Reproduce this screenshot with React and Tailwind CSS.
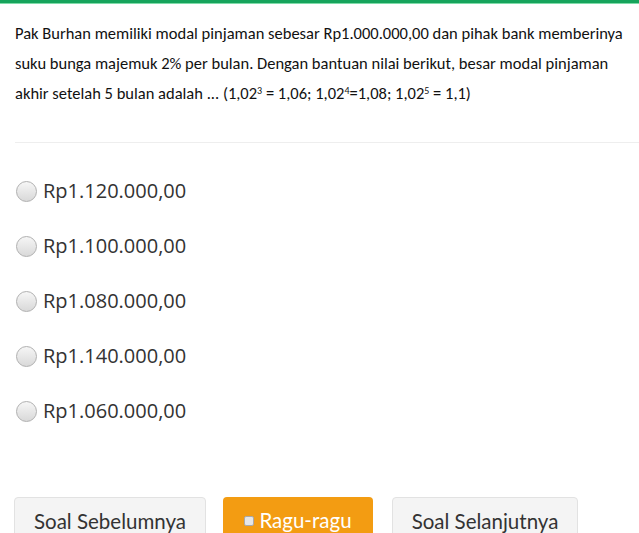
// Ujian online — soal pilihan ganda dengan navigasi

const options = [
  'Rp1.120.000,00',
  'Rp1.100.000,00',
  'Rp1.080.000,00',
  'Rp1.140.000,00',
  'Rp1.060.000,00',
]

function Radio() {
  return (
    <span className="w-[21px] h-[21px] shrink-0 rounded-full border border-[#b0b0b0] bg-gradient-to-b from-[#f6f6f6] to-[#d9d9d9]" />
  )
}

export default function App() {
  return (
    <div className="w-[639px] h-[533px] overflow-hidden bg-white">
      {/* top accent */}
      <div className="h-[4px] bg-[#16a45c] border-b border-[#7fdca9]" />

      {/* question */}
      <div className="pl-[15px] pt-[14px] text-[16.5px] leading-[30px] text-[#111] whitespace-nowrap font-['Carlito','Lato',sans-serif]">
        <p>Pak Burhan memiliki modal pinjaman sebesar Rp1.000.000,00 dan pihak bank memberinya</p>
        <p>suku bunga majemuk 2% per bulan. Dengan bantuan nilai berikut, besar modal pinjaman</p>
        <p>
          akhir setelah 5 bulan adalah ... (1,02<sup className="text-[10px]">3</sup> = 1,06; 1,02
          <sup className="text-[10px]">4</sup>=1,08; 1,02<sup className="text-[10px]">5</sup> = 1,1)
        </p>
      </div>

      <div className="ml-[15px] mt-[34px] border-t border-[#eeeeee]" />

      {/* options */}
      <div className="pl-[16px] pt-[37px] flex flex-col gap-[33px] font-['Open_Sans',sans-serif] text-[20px] text-[#333]">
        {options.map(o => (
          <label key={o} className="flex items-center gap-[6px] h-[22px]">
            <Radio />
            <span>{o}</span>
          </label>
        ))}
      </div>

      {/* navigation */}
      <div className="pl-[14px] pt-[75px] flex gap-[17px] font-['Lato',sans-serif] text-[20.5px] leading-[26px]">
        <button className="w-[192px] h-[48px] pt-[10px] rounded-[4px] border border-[#e2e2e2] bg-[#f4f4f4] text-[#333] flex justify-center">
          Soal Sebelumnya
        </button>
        <button className="w-[150px] h-[48px] pt-[10px] rounded-[4px] bg-[#f39c12] text-white flex items-start justify-center gap-[5px]">
          <span className="mt-[9px] w-[10px] h-[10px] rounded-[2px] border border-[#a9a9a9] bg-[#e6e6e6]" />
          <span>Ragu-ragu</span>
        </button>
        <button className="ml-[2px] w-[186px] h-[48px] pt-[10px] rounded-[4px] border border-[#e2e2e2] bg-[#f4f4f4] text-[#333] flex justify-center">
          Soal Selanjutnya
        </button>
      </div>
    </div>
  )
}
